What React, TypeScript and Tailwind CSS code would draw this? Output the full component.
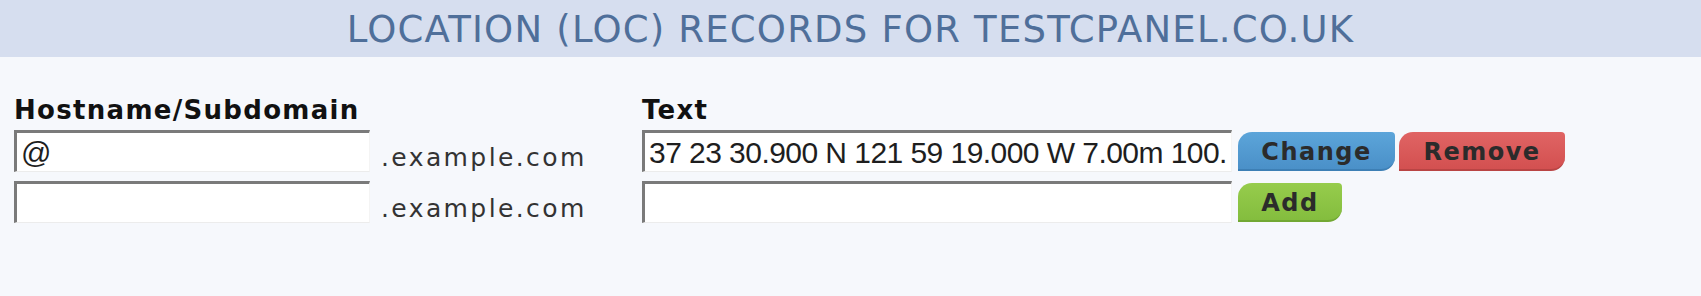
import { useState } from "react";

type LocRecord = {
  host: string;
  text: string;
};

const records: LocRecord[] = [
  { host: "@", text: "37 23 30.900 N 121 59 19.000 W 7.00m 100.00m 100.00m 2.00m" },
];

const inputClass =
  "h-[42px] w-full bg-white border-t-[3px] border-l-[3px] border-b border-r border-t-[#7a7a7a] border-l-[#7a7a7a] border-b-[#ececec] border-r-[#f4f4f4] px-[4px] text-[30px] tracking-[-0.55px] text-[#1e1e1e] font-['Liberation_Sans',Arial,sans-serif] outline-none";

const btnBase =
  "h-[39px] rounded-tl-[14px] rounded-tr-[4px] rounded-br-[14px] rounded-bl-none border-b-2 font-['DejaVu_Sans',Verdana,sans-serif] font-bold text-[24px] tracking-[1.5px] text-[#2b2b2b] leading-none pt-[2px]";

const RecordRow = ({ record }: { record?: LocRecord }) => {
  const [host, setHost] = useState(record?.host ?? "");
  const [text, setText] = useState(record?.text ?? "");

  return (
    <>
      <input className={inputClass} value={host} onChange={(e) => setHost(e.target.value)} />
      <span className="h-[42px] flex items-end pb-[2px] pl-[11px] text-[25px] leading-none tracking-[2.4px] text-[#333] font-['DejaVu_Sans',Verdana,sans-serif]">
        .example.com
      </span>
      <input className={inputClass} value={text} onChange={(e) => setText(e.target.value)} />
      <div className="flex gap-[4px] pl-[6px] items-start pt-[2px]">
        {record ? (
          <>
            <button className={`${btnBase} w-[157px] bg-gradient-to-b from-[#5ca5da] to-[#4a90c8] border-b-[#3d7fb5]`}>
              Change
            </button>
            <button className={`${btnBase} w-[166px] bg-gradient-to-b from-[#e06464] to-[#d35050] border-b-[#b94444]`}>
              Remove
            </button>
          </>
        ) : (
          <button className={`${btnBase} w-[104px] bg-gradient-to-b from-[#96cc4c] to-[#84bd3e] border-b-[#72a833]`}>
            Add
          </button>
        )}
      </div>
    </>
  );
};

export default function App() {
  return (
    <div className="w-[1701px] h-[296px] bg-[#f6f8fc] overflow-hidden">
      {/* Title bar */}
      <div className="h-[57px] bg-[#d6deef] flex items-center justify-center">
        <h1 className="text-[37px] text-[#4f6f9a] font-['DejaVu_Sans',sans-serif] tracking-[1.2px] leading-none pt-[1px]">
          LOCATION (LOC) RECORDS FOR TESTCPANEL.CO.UK
        </h1>
      </div>

      {/* Records */}
      <div className="pl-[14px] pt-[38px]">
        <div className="grid grid-cols-[356px_272px_590px_auto] gap-y-[9px]">
          <div className="text-[26px] font-bold leading-[30px] tracking-[1.3px] text-[#111] font-['DejaVu_Sans',Verdana,sans-serif] -mb-[4px]">
            Hostname/Subdomain
          </div>
          <div />
          <div className="text-[26px] font-bold leading-[30px] tracking-[1.3px] text-[#111] font-['DejaVu_Sans',Verdana,sans-serif] -mb-[4px]">
            Text
          </div>
          <div />
          {records.map((r) => (
            <RecordRow key={r.host} record={r} />
          ))}
          <RecordRow />
        </div>
      </div>
    </div>
  );
}
